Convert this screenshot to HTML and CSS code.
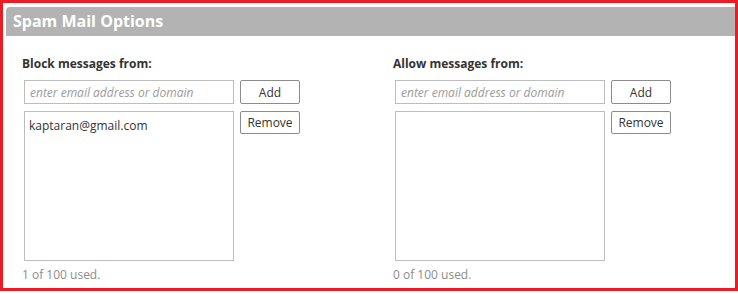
FILE: index.html
```html
<!DOCTYPE html>
<html lang="en">
<head>
  <meta charset="UTF-8">
  <title>Spam Mail Options</title>
  <link rel="stylesheet" href="styles.css">
</head>
<body>

<div class="frame">
  <div class="panel-title">Spam Mail Options</div>

  <div class="columns">
    <div class="col">
      <div class="col-label">Block messages from:</div>
      <div class="row">
        <input type="text" class="addr" placeholder="enter email address or domain">
        <button class="btn">Add</button>
      </div>
      <div class="row">
        <div class="list">
          <div class="list-item">kaptaran@gmail.com</div>
        </div>
        <button class="btn">Remove</button>
      </div>
      <div class="used">1 of 100 used.</div>
    </div>

    <div class="col">
      <div class="col-label">Allow messages from:</div>
      <div class="row">
        <input type="text" class="addr" placeholder="enter email address or domain">
        <button class="btn">Add</button>
      </div>
      <div class="row">
        <div class="list"></div>
        <button class="btn">Remove</button>
      </div>
      <div class="used">0 of 100 used.</div>
    </div>
  </div>
</div>

</body>
</html>
```

FILE: styles.css
```css
body {
  margin: 0;
  font-family: "Open Sans", "Noto Sans", Arial, sans-serif;
  background-color: #fff;
  color: #333;
}
.frame {
  box-sizing: border-box;
  width: 738px;
  height: 291px;
  border: 3px solid #ed1c24;
  overflow: hidden;
}
.panel-title {
  margin: 4px 0 0 3px;
  height: 29px;
  line-height: 29px;
  padding-left: 7px;
  background-color: #b3b3b3;
  border-radius: 4px 0 0 0;
  color: #fff;
  font-size: 16px;
  font-weight: bold;
}
.columns {
  display: flex;
  padding: 19px 0 0 19px;
}
.col {
  flex-shrink: 0;
  width: 371px;
}
.col-label {
  font-size: 12px;
  font-weight: bold;
  color: #333;
  height: 17px;
  line-height: 17px;
  margin-bottom: 8px;
}
.row {
  display: flex;
  align-items: flex-start;
  gap: 6px;
  margin-left: 2px;
  margin-bottom: 7px;
}
.addr {
  box-sizing: border-box;
  width: 210px;
  height: 24px;
  margin: 0;
  padding: 0 5px;
  border: 1px solid #bdbdbd;
  font-family: inherit;
  font-size: 12px;
  color: #333;
}
.addr::placeholder {
  color: #9a9a9a;
  font-style: italic;
}
.btn {
  box-sizing: border-box;
  width: 60px;
  height: 24px;
  margin: 0;
  padding: 0;
  background: #fff;
  border: 1px solid #8c8c8c;
  border-radius: 2px;
  font-family: inherit;
  font-size: 12px;
  color: #333;
}
.row .list + .btn {
  height: 23px;
}
.list {
  box-sizing: border-box;
  width: 210px;
  height: 150px;
  border: 1px solid #bdbdbd;
  padding: 5px 4px;
}
.list-item {
  font-size: 12px;
  color: #333;
}
.used {
  font-size: 12px;
  color: #8c8c8c;
  margin-top: -2px;
}
```
